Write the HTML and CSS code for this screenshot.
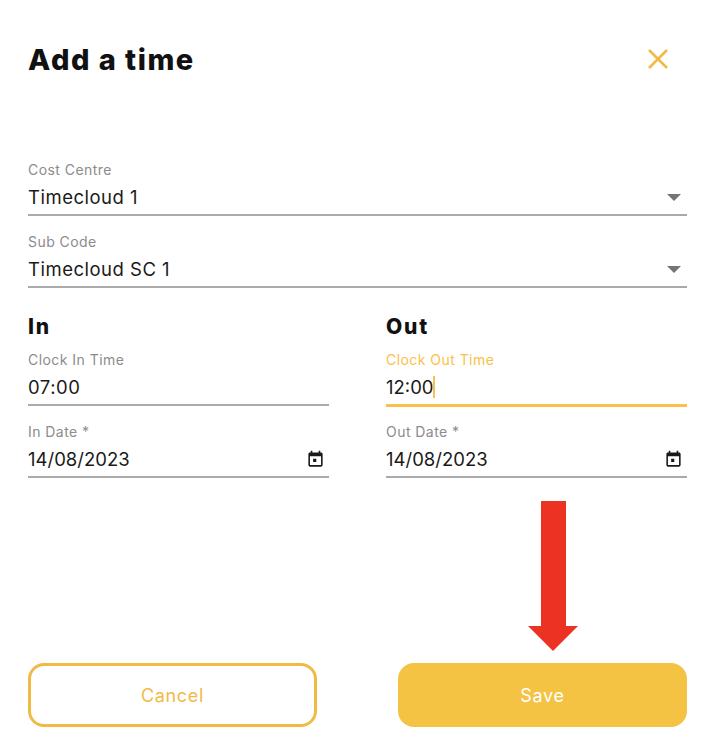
FILE: index.html
```html
<!DOCTYPE html>
<html lang="en">
<head>
    <meta charset="UTF-8">
    <meta name="viewport" content="width=device-width, initial-scale=1.0">
    <title>Add a time</title>
    <link rel="stylesheet" href="styles.css">
</head>
<body>
<div class="dialog">
    <div class="dialog__header">
        <h2 class="dialog__title">Add a time</h2>
        <svg class="dialog__close" viewBox="0 0 20 20" aria-label="Close">
            <path d="M1 1l18 18M19 1L1 19"/>
        </svg>
    </div>

    <div class="field field_wide">
        <div class="field__label">Cost Centre</div>
        <div class="field__control">
            <span class="field__value">Timecloud 1</span>
            <svg class="field__arrow" viewBox="0 0 14 7"><polygon points="0,0 14,0 7,7"/></svg>
        </div>
    </div>

    <div class="field field_wide">
        <div class="field__label">Sub Code</div>
        <div class="field__control">
            <span class="field__value">Timecloud SC 1</span>
            <svg class="field__arrow" viewBox="0 0 14 7"><polygon points="0,0 14,0 7,7"/></svg>
        </div>
    </div>

    <div class="times">
        <div class="times__col">
            <h3 class="times__heading">In</h3>
            <div class="field">
                <div class="field__label">Clock In Time</div>
                <div class="field__control">
                    <span class="field__value">07:00</span>
                </div>
            </div>
            <div class="field">
                <div class="field__label">In Date *</div>
                <div class="field__control">
                    <span class="field__value field__value_tight">14/08/2023</span>
                    <svg class="field__date" viewBox="0 0 24 24"><path d="M19 3h-1V1h-2v2H8V1H6v2H5c-1.11 0-1.99.9-1.99 2L3 19c0 1.1.89 2 2 2h14c1.1 0 2-.9 2-2V5c0-1.1-.9-2-2-2zm0 16H5V8h14v11zM9 11h4v4H9z"/></svg>
                </div>
            </div>
        </div>
        <div class="times__col">
            <h3 class="times__heading">Out</h3>
            <div class="field field_focus">
                <div class="field__label">Clock Out Time</div>
                <div class="field__control">
                    <span class="field__value field__value_tight">12:00</span><span class="field__caret"></span>
                </div>
            </div>
            <div class="field">
                <div class="field__label">Out Date *</div>
                <div class="field__control">
                    <span class="field__value field__value_tight">14/08/2023</span>
                    <svg class="field__date" viewBox="0 0 24 24"><path d="M19 3h-1V1h-2v2H8V1H6v2H5c-1.11 0-1.99.9-1.99 2L3 19c0 1.1.89 2 2 2h14c1.1 0 2-.9 2-2V5c0-1.1-.9-2-2-2zm0 16H5V8h14v11zM9 11h4v4H9z"/></svg>
                </div>
            </div>
        </div>
    </div>

    <div class="actions">
        <button type="button" class="actions__button actions__cancel">Cancel</button>
        <button type="button" class="actions__button actions__save">Save</button>
    </div>

    <svg class="pointer" viewBox="0 0 50 150"><polygon points="13,0 38,0 38,125 50,125 25,150 0,125 13,125" /></svg>
</div>
</body>
</html>
```

FILE: styles.css
```css
body {
    margin: 0;
    background-color: #fff;
    font-family: Inter, sans-serif;
    color: #111;
}
.dialog {
    position: relative;
    box-sizing: border-box;
    width: 702px;
    height: 748px;
    padding: 0 15px 0 28px;
    display: flex;
    flex-direction: column;
}
.dialog__header {
    height: 160px;
    flex-shrink: 0;
    display: flex;
    justify-content: space-between;
    align-items: flex-start;
}
.dialog__title {
    margin: 42px 0 0;
    font-size: 29px;
    line-height: 36px;
    font-weight: 800;
    letter-spacing: 1.5px;
}
.dialog__close {
    width: 20px;
    height: 20px;
    margin: 49px 19px 0 0;
    fill: none;
    stroke: #f0bb45;
    stroke-width: 2.6;
}
.field {
    height: 72px;
    box-sizing: border-box;
    padding-top: 1px;
}
.field__label {
    font-size: 14px;
    line-height: 17px;
    letter-spacing: 0.45px;
    color: #8c8c8c;
}
.field__control {
    height: 31px;
    margin-top: 3px;
    padding-bottom: 2px;
    display: flex;
    align-items: center;
    border-bottom: 2px solid #aaa;
}
.field__value {
    font-size: 18.5px;
    line-height: 26px;
    letter-spacing: 0.5px;
    color: #1a1a1a;
}
.field__value_tight {
    letter-spacing: 0;
}
.field__arrow {
    width: 14px;
    height: 7px;
    margin: 2px 6px 0 auto;
    fill: #757575;
}
.field__date {
    width: 19px;
    height: 19px;
    margin: 2px 4px 0 auto;
    fill: #1a1a1a;
}
.field__caret {
    width: 2px;
    height: 22px;
    background-color: #f9c04b;
}
.field_focus .field__label {
    color: #f9c04b;
}
.field_focus .field__control {
    border-bottom: 3px solid #f9c04b;
}
.times {
    display: grid;
    grid-template-columns: 301px 301px;
    column-gap: 57px;
    margin-top: 9px;
}
.times__heading {
    margin: 0;
    height: 37px;
    font-size: 21px;
    line-height: 28px;
    font-weight: 800;
    letter-spacing: 1.8px;
}
.actions {
    margin-top: auto;
    margin-bottom: 21px;
    display: flex;
    justify-content: space-between;
}
.actions__button {
    width: 289px;
    height: 64px;
    box-sizing: border-box;
    border-radius: 16px;
    font-family: Inter, sans-serif;
    font-size: 18px;
    letter-spacing: 0.7px;
}
.actions__cancel {
    background-color: #fff;
    border: 3px solid #f0bb45;
    color: #f0bb45;
}
.actions__save {
    background-color: #f5c344;
    border: none;
    color: #fff;
}
.pointer {
    position: absolute;
    left: 528px;
    top: 501px;
    width: 50px;
    height: 150px;
    fill: #ec3323;
}
```
